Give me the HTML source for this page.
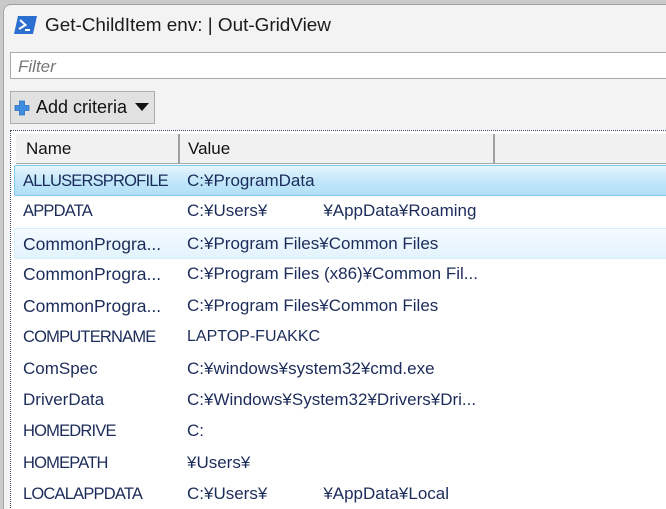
<!DOCTYPE html>
<html><head><meta charset="utf-8"><style>
*{margin:0;padding:0;box-sizing:border-box}
html,body{width:666px;height:509px;overflow:hidden}
body{background:#c9c9c9;font-family:"Liberation Sans","Noto Sans CJK JP",sans-serif;position:relative}
.win{position:absolute;left:3px;top:4px;width:680px;height:520px;background:#f3f3f3;border-left:1px solid #a6a6a6;border-top:1px solid #a0a0a0;border-top-left-radius:8px}
.title{position:absolute;left:45px;top:15px;font-size:18.9px;color:#1b1b1b}
.filter{position:absolute;left:10px;top:52px;width:670px;height:27px;background:#fff;border:1px solid #a9a9a9;border-right:none}
.filter span{position:absolute;left:7px;top:4px;font-size:17px;font-style:italic;color:#777}
.btn{position:absolute;left:10px;top:91px;width:145px;height:33px;background:#e1e1e1;border:1px solid #adadad}
.btn .t{position:absolute;left:25px;top:5px;font-size:18px;color:#111}
.grid{position:absolute;left:10px;top:130px;width:670px;height:400px;border:1px dotted #3a4a66;background:#fff}
.hdr{position:absolute;left:5px;top:3px;width:670px;height:30px;background:#f1f1f1;border-bottom:1px solid #a9a9a9}
.hdr span{position:absolute;top:5px;font-size:17px;color:#111}
.div{position:absolute;top:0;width:2px;height:30px;background:#a0a0a0}
.row{position:absolute;left:3px;width:670px;height:31px;font-size:17px;color:#1c2c5a}
.row span{position:absolute;top:5px;white-space:nowrap}
.c{letter-spacing:-0.8px;font-size:16.5px;top:6px!important}
.sel{background:linear-gradient(#e6f6fe,#c0e6f9 55%,#b2e0f7);border:1px solid #7fc8ee;border-radius:2px}
.hov{background:linear-gradient(#f4fbff,#e3f3fd);border:1px solid #d6eefb;border-radius:2px}
</style></head><body>
<div class="win"></div>
<svg style="position:absolute;left:14px;top:15px" width="24" height="20" viewBox="0 0 24 20"><path d="M4 1H23L19 19H0Z" fill="#2b6fd0"/><path d="M6 5L11.5 10L5 14" stroke="#fff" stroke-width="2" fill="none"/><path d="M11 15H16" stroke="#fff" stroke-width="2"/></svg>
<div class="title">Get-ChildItem env: | Out-GridView</div>
<div class="filter"><span>Filter</span></div>
<div class="btn"><svg style="position:absolute;left:3px;top:8px" width="16" height="16" viewBox="0 0 16 16"><path d="M5.5 1h5v4.5H15v5h-4.5V15h-5v-4.5H1v-5h4.5z" fill="#3d8ee0" stroke="#2a6fbf" stroke-width="0.8"/></svg><span class="t">Add criteria</span><svg style="position:absolute;left:124px;top:11px" width="14" height="9"><path d="M0 0H14L7 8Z" fill="#111"/></svg></div>
<div class="grid">
<div class="hdr"><span style="left:10px">Name</span><div class="div" style="left:162px"></div><span style="left:172px">Value</span><div class="div" style="left:477px"></div></div>
<div class="row sel" style="top:34px"><span class="c" style="left:8px">ALLUSERSPROFILE</span><span style="left:172px">C:¥ProgramData</span></div>
<div class="row" style="top:65px"><span class="c" style="left:9px">APPDATA</span><span style="left:173px">C:¥Users¥<span style="position:static;display:inline-block;width:56px"></span>¥AppData¥Roaming</span></div>
<div class="row hov" style="top:97px"><span style="left:8px;font-size:17.5px">CommonProgra...</span><span style="left:172px">C:¥Program Files¥Common Files</span></div>
<div class="row" style="top:128px"><span style="left:9px;font-size:17.5px">CommonProgra...</span><span style="left:173px">C:¥Program Files (x86)¥Common Fil...</span></div>
<div class="row" style="top:160px"><span style="left:9px;font-size:17.5px">CommonProgra...</span><span style="left:173px">C:¥Program Files¥Common Files</span></div>
<div class="row" style="top:191px"><span class="c" style="left:9px">COMPUTERNAME</span><span style="left:173px;font-size:16px;top:6px">LAPTOP-FUAKKC</span></div>
<div class="row" style="top:223px"><span style="left:9px">ComSpec</span><span style="left:173px">C:¥windows¥system32¥cmd.exe</span></div>
<div class="row" style="top:254px"><span style="left:9px">DriverData</span><span style="left:173px">C:¥Windows¥System32¥Drivers¥Dri...</span></div>
<div class="row" style="top:285px"><span class="c" style="left:9px">HOMEDRIVE</span><span style="left:173px">C:</span></div>
<div class="row" style="top:317px"><span class="c" style="left:9px">HOMEPATH</span><span style="left:173px">¥Users¥</span></div>
<div class="row" style="top:348px"><span class="c" style="left:9px">LOCALAPPDATA</span><span style="left:173px">C:¥Users¥<span style="position:static;display:inline-block;width:56px"></span>¥AppData¥Local</span></div>
</div>
</body></html>
